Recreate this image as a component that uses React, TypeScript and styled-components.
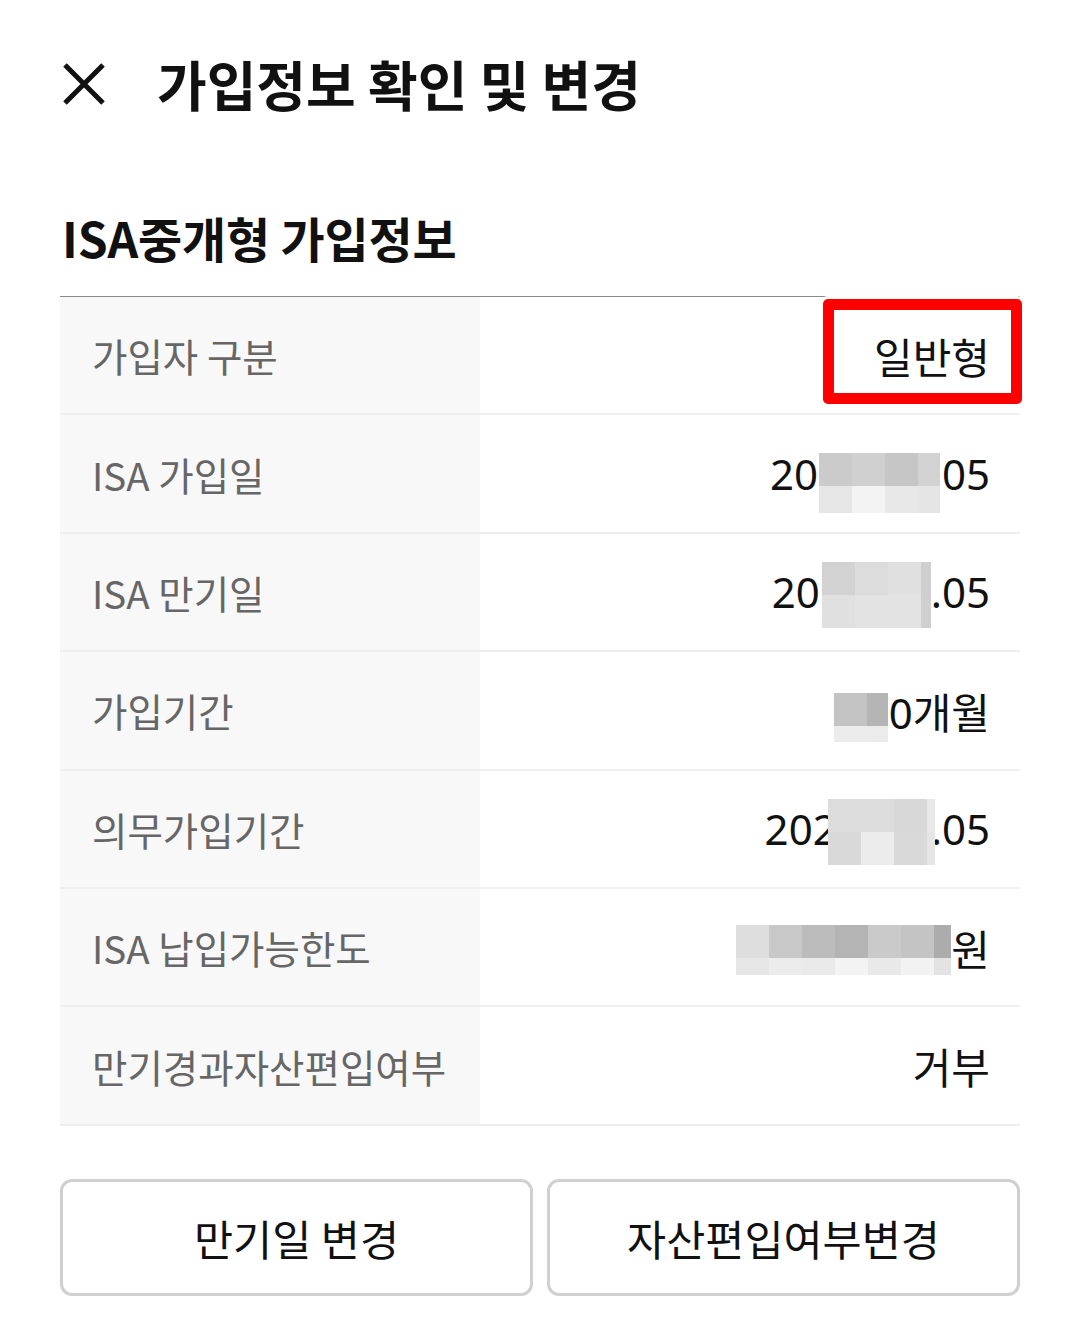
import styled, { createGlobalStyle } from "styled-components";

const GlobalStyle = createGlobalStyle`
    * {
        box-sizing: border-box;
        margin: 0;
        padding: 0;
    }
    body {
        background: #ffffff;
        color: #111111;
        font-family: "Noto Sans CJK KR", "Noto Sans", sans-serif;
    }
`;

const Page = styled.main`
    width: 1080px;
    padding: 0 60px 40px;
`;

const Header = styled.header`
    display: flex;
    align-items: center;
    gap: 51px;
    height: 168px;
    padding-left: 2px;
`;

const CloseButton = styled.button`
    display: flex;
    align-items: center;
    justify-content: center;
    width: 44px;
    height: 44px;
    border: none;
    background: none;
    color: #111;
`;

const PageTitle = styled.h1`
    font-size: 54px;
    font-weight: 700;
    line-height: 62px;
    color: #111;
`;

const SectionTitle = styled.h2`
    font-size: 48px;
    font-weight: 700;
    letter-spacing: -0.2px;
    line-height: 58px;
    margin: 40px 0 30px 2px;
    color: #111;
`;

const Table = styled.div`
    border-top: 1.5px solid #8a8a8a;
`;

const Row = styled.div`
    position: relative;
    display: grid;
    grid-template-columns: 420px 1fr;
    height: 118.4px;
    border-bottom: 2px solid #efefef;
`;

const Label = styled.div`
    display: flex;
    align-items: center;
    padding-left: 32px;
    background: #f8f8f8;
    color: #666666;
    font-size: 38.5px;
`;

const Value = styled.div`
    display: flex;
    align-items: center;
    justify-content: flex-end;
    padding-right: 30px;
    color: #111111;
    font-family: "Noto Sans", "Noto Sans CJK KR", sans-serif;
    font-size: 42px;
    white-space: pre;
`;

const Highlight = styled.span`
    position: absolute;
    top: 1.5px;
    right: -2px;
    width: 199px;
    height: 105px;
    border: 11px solid #ff0000;
    border-radius: 5px;
    box-shadow: 0 0 0 3px #ffffff;
    pointer-events: none;
`;

const MosaicGrid = styled.span<{ $cols: number[]; $rows: number[]; $shift: number; $left: number; $right: number }>`
    display: inline-grid;
    grid-template-columns: ${(p) => p.$cols.map((c) => `${c}px`).join(" ")};
    grid-template-rows: ${(p) => p.$rows.map((r) => `${r}px`).join(" ")};
    margin: ${(p) => p.$shift * 2}px ${(p) => p.$right}px 0 ${(p) => p.$left}px;
    position: relative;
`;

const MosaicCell = styled.span<{ $c: string }>`
    background: ${(p) => p.$c};
`;

const Actions = styled.div`
    display: grid;
    grid-template-columns: 1fr 1fr;
    gap: 14px;
    margin-top: 53px;
`;

const ActionButton = styled.button`
    height: 117px;
    border: 3px solid #d0d0d0;
    border-radius: 12px;
    background: #ffffff;
    color: #111111;
    font-family: "Noto Sans CJK KR", "Noto Sans", sans-serif;
    font-size: 42.5px;
`;

type MosaicProps = {
    cols: number[];
    rows: number[];
    colors: string[];
    shift?: number;
    left?: number;
    right?: number;
};

const Mosaic = ({ cols, rows, colors, shift = 0, left = 0, right = 0 }: MosaicProps) => (
    <MosaicGrid $cols={cols} $rows={rows} $shift={shift} $left={left} $right={right}>
        {colors.map((c, i) => (
            <MosaicCell key={i} $c={c} />
        ))}
    </MosaicGrid>
);

const CloseIcon = () => (
    <svg width="44" height="44" viewBox="0 0 44 44" fill="none">
        <path d="M3 3 L41 41 M41 3 L3 41" stroke="currentColor" strokeWidth="5" strokeLinecap="butt" />
    </svg>
);

const App = () => {
    return (
        <>
            <GlobalStyle />
            <Page>
                <Header>
                    <CloseButton aria-label="닫기">
                        <CloseIcon />
                    </CloseButton>
                    <PageTitle>가입정보 확인 및 변경</PageTitle>
                </Header>

                <SectionTitle>ISA중개형 가입정보</SectionTitle>

                <Table>
                    <Row>
                        <Label>가입자 구분</Label>
                        <Value>일반형</Value>
                        <Highlight />
                    </Row>
                    <Row>
                        <Label>ISA 가입일</Label>
                        <Value>
                            20
                            <Mosaic
                                cols={[33, 33, 33, 22]}
                                rows={[33, 27]}
                                shift={9}
                                left={1}
                                right={2}
                                colors={["#cbcbcb", "#d0d0d0", "#c6c6c6", "#d2d2d2", "#e6e6e6", "#f3f3f3", "#e8e8e8", "#e5e5e5"]}
                            />
                            05
                        </Value>
                    </Row>
                    <Row>
                        <Label>ISA 만기일</Label>
                        <Value>
                            20
                            <Mosaic
                                cols={[33, 33, 33, 10]}
                                rows={[33, 33]}
                                shift={3}
                                left={2}
                                right={0}
                                colors={["#d2d2d2", "#dcdcdc", "#e0e0e0", "#cfcfcf", "#e0e0e0", "#e3e3e3", "#e3e3e3", "#cfcfcf"]}
                            />
                            .05
                        </Value>
                    </Row>
                    <Row>
                        <Label>가입기간</Label>
                        <Value>
                            <Mosaic
                                cols={[33, 21]}
                                rows={[33, 16]}
                                shift={7}
                                right={1}
                                colors={["#c3c3c3", "#b5b5b5", "#ececec", "#ebebeb"]}
                            />
                            0개월
                        </Value>
                    </Row>
                    <Row>
                        <Label>의무가입기간</Label>
                        <Value>
                            202
                            <Mosaic
                                cols={[33, 33, 33, 8]}
                                rows={[33, 33]}
                                shift={3}
                                left={-9}
                                right={-4}
                                colors={["#dcdcdc", "#dcdcdc", "#d8d8d8", "#e8e8e8", "#d9d9d9", "#ececec", "#d9d9d9", "#e5e5e5"]}
                            />
                            .05
                        </Value>
                    </Row>
                    <Row>
                        <Label>ISA 납입가능한도</Label>
                        <Value>
                            <Mosaic
                                cols={[33, 33, 33, 33, 33, 33, 17]}
                                rows={[33, 17]}
                                shift={3}
                                colors={[
                                    "#dedede", "#c8c8c8", "#bcbcbc", "#b4b4b4", "#cacaca", "#c4c4c4", "#acacac",
                                    "#e6e6e6", "#ececec", "#eaeaea", "#f3f3f3", "#e9e9e9", "#f2f2f2", "#e3e3e3",
                                ]}
                            />
                            원
                        </Value>
                    </Row>
                    <Row>
                        <Label>만기경과자산편입여부</Label>
                        <Value>거부</Value>
                    </Row>
                </Table>

                <Actions>
                    <ActionButton>만기일 변경</ActionButton>
                    <ActionButton>자산편입여부변경</ActionButton>
                </Actions>
            </Page>
        </>
    );
};

export default App;
